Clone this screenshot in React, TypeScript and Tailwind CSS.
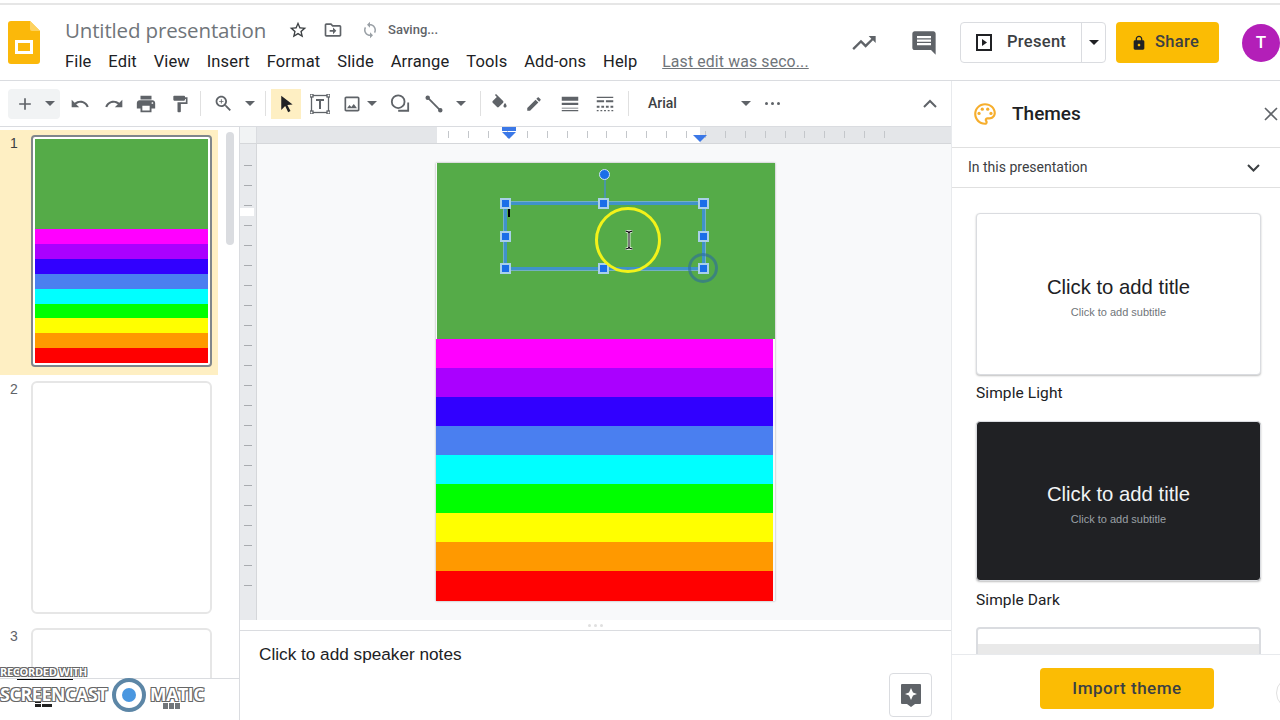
import React from 'react';

const I: React.FC<{ d: string; size?: number; className?: string; children?: React.ReactNode }> = ({ d, size = 24, className = '', children }) => (
  <svg width={size} height={size} viewBox="0 0 24 24" fill="currentColor" className={className}>
    <path d={d} />
    {children}
  </svg>
);

const P = {
  plus: 'M19 13h-6v6h-2v-6H5v-2h6V5h2v6h6v2z',
  undo: 'M12.5 8c-2.65 0-5.05.99-6.9 2.6L2 7v9h9l-3.62-3.62c1.39-1.16 3.16-1.88 5.12-1.88 3.54 0 6.55 2.31 7.6 5.5l2.37-.78C21.08 11.03 17.15 8 12.5 8z',
  redo: 'M18.4 10.6C16.55 8.99 14.15 8 11.5 8c-4.65 0-8.58 3.03-9.96 7.22L3.9 16c1.05-3.19 4.05-5.5 7.6-5.5 1.95 0 3.73.72 5.12 1.88L13 16h9V7l-3.6 3.6z',
  print: 'M19 8H5c-1.66 0-3 1.34-3 3v6h4v4h12v-4h4v-6c0-1.66-1.34-3-3-3zm-3 11H8v-5h8v5zm3-7c-.55 0-1-.45-1-1s.45-1 1-1 1 .45 1 1-.45 1-1 1zm-1-9H6v4h12V3z',
  paint: 'M18 4V3c0-.55-.45-1-1-1H5c-.55 0-1 .45-1 1v4c0 .55.45 1 1 1h12c.55 0 1-.45 1-1V6h1v4H9v11c0 .55.45 1 1 1h2c.55 0 1-.45 1-1v-9h8V4h-3z',
  zoom: 'M15.5 14h-.79l-.28-.27C15.41 12.59 16 11.11 16 9.5 16 5.91 13.09 3 9.5 3S3 5.91 3 9.5 5.91 16 9.5 16c1.61 0 3.09-.59 4.23-1.57l.27.28v.79l5 4.99L20.49 19l-4.99-5zm-6 0C7.01 14 5 11.99 5 9.5S7.01 5 9.5 5 14 7.01 14 9.5 11.99 14 9.5 14zm.5-7H9v2H7v1h2v2h1v-2h2V9h-2z',
  arrow: 'M6 3l13 10.2-6 .5 3.6 7-2.7 1.3-3.4-7.1L6 19.5z',
  image: 'M19 5v14H5V5h14m0-2H5c-1.1 0-2 .9-2 2v14c0 1.1.9 2 2 2h14c1.1 0 2-.9 2-2V5c0-1.1-.9-2-2-2zm-4.86 8.86l-3 3.87L9 13.14 6 17h12l-3.86-5.14z',
  fill: 'M16.56 8.94L7.62 0 6.21 1.41l2.38 2.38-5.15 5.15c-.59.59-.59 1.54 0 2.12l5.5 5.5c.29.29.68.44 1.06.44s.77-.15 1.06-.44l5.5-5.5c.59-.58.59-1.53 0-2.12zM19 11.5s-2 2.17-2 3.5c0 1.1.9 2 2 2s2-.9 2-2c0-1.33-2-3.5-2-3.5z',
  pencil: 'M3 17.25V21h3.75L17.81 9.94l-3.75-3.75L3 17.25zM20.71 7.04c.39-.39.39-1.02 0-1.41l-2.34-2.34c-.39-.39-1.02-.39-1.41 0l-1.83 1.83 3.75 3.75 1.83-1.83z',
  weight: 'M3 17h18v-1H3v1zm0 3h18v-1.5H3V20zM3 13h18v-2.5H3V13zM3 4v4.5h18V4H3z',
  dash: 'M3 16h3v-2H3v2zm5 0h3v-2H8v2zm5 0h3v-2h-3v2zm5 0h3v-2h-3v2zM3 20h2v-1.500H3V20zm4 0h2v-1.500H7V20zm4 0h2v-1.500h-2V20zm4 0h2v-1.500h-2V20zm4 0h2v-1.500h-2V20zM3 10h8V8H3v2zm10 0h8V8h-8v2zM3 5.500h18V4H3v1.500z',
  star: 'M22 9.24l-7.19-.62L12 2 9.19 8.63 2 9.24l5.46 4.73L5.82 21 12 17.27 18.18 21l-1.63-7.03L22 9.24zM12 15.4l-3.76 2.27 1-4.28-3.32-2.88 4.38-.38L12 6.1l1.71 4.04 4.38.38-3.32 2.88 1 4.28L12 15.4z',
  move: 'M20 6h-8l-2-2H4c-1.1 0-2 .9-2 2v12c0 1.1.9 2 2 2h16c1.1 0 2-.9 2-2V8c0-1.1-.9-2-2-2zm0 12H4V6h5.17l2 2H20v10zm-8-1v-3H8v-2h4V9l4 4-4 4z',
  sync: 'M12 4V1L8 5l4 4V6c3.31 0 6 2.69 6 6 0 1.01-.25 1.97-.7 2.8l1.46 1.46C19.54 15.03 20 13.57 20 12c0-4.42-3.58-8-8-8zm0 14c-3.31 0-6-2.69-6-6 0-1.010.25-1.970.7-2.800L5.240 7.740C4.460 8.970 4 10.430 4 12c0 4.420 3.580 8 8 8v3l4-4-4-4v3z',
  trend: 'M16 6l2.290 2.290-4.880 4.880-4-4L2 16.590 3.410 18l6-6 4 4 6.300-6.290L22 12V6z',
  comment: 'M21.990 4c0-1.100-.890-2-1.990-2H4c-1.100 0-2 .900-2 2v12c0 1.100.900 2 2 2h14l4 4-.010-18zM18 14H6v-2h12v2zm0-3H6V9h12v2zm0-3H6V6h12v2z',
  lock: 'M18 8h-1V6c0-2.760-2.240-5-5-5S7 3.240 7 6v2H6c-1.100 0-2 .900-2 2v10c0 1.100.900 2 2 2h12c1.100 0 2-.900 2-2V10c0-1.100-.900-2-2-2zm-6 9c-1.100 0-2-.900-2-2s.900-2 2-2 2 .900 2 2-.900 2-2 2zm3.100-9H8.900V6c0-1.710 1.390-3.100 3.100-3.100 1.710 0 3.100 1.390 3.100 3.100v2z',
  palette: 'M12 22C6.490 22 2 17.510 2 12S6.490 2 12 2s10 4.040 10 9c0 3.310-2.690 6-6 6h-1.770c-.280 0-.500.220-.500.500 0 .120.050.230.130.330.410.470.640 1.060.640 1.670 0 1.380-1.120 2.500-2.500 2.500zm0-18c-4.410 0-8 3.590-8 8s3.590 8 8 8c.280 0 .500-.220.500-.500 0-.160-.080-.280-.140-.350-.410-.460-.630-1.050-.630-1.650 0-1.380 1.120-2.500 2.500-2.500H16c2.210 0 4-1.790 4-4 0-3.860-3.590-7-8-7z',
};

const Caret: React.FC<{ className?: string }> = ({ className = 'text-[#5f6368]' }) => (
  <svg width="10" height="5" viewBox="0 0 10 5" fill="currentColor" className={className}>
    <path d="M0 0h10L5 5z" />
  </svg>
);

const Sep: React.FC<{ w: string }> = ({ w }) => (
  <div className={`${w} h-full flex items-center justify-center`}>
    <div className="w-px h-[25px] bg-[#e0e0e0]" />
  </div>
);

const MENU = ['File', 'Edit', 'View', 'Insert', 'Format', 'Slide', 'Arrange', 'Tools', 'Add-ons', 'Help'];

const STRIPES = ['bg-[#ff00ff]', 'bg-[#aa00ff]', 'bg-[#3100ff]', 'bg-[#4a7ff0]', 'bg-[#00ffff]', 'bg-[#00ff00]', 'bg-[#ffff00]', 'bg-[#ff9900]', 'bg-[#ff0000]'];

const Header = () => (
  <div className="h-[78px] shrink-0 mt-[3px] border-t-2 border-t-[#e6e6e6] border-b border-b-[#dadce0] flex items-start">
    <svg width="32" height="43" viewBox="0 0 32 43" className="ml-[8px] mt-[16px] shrink-0">
      <path d="M3 0h19l10 10v30a3 3 0 0 1-3 3H3a3 3 0 0 1-3-3V3a3 3 0 0 1 3-3z" fill="#fbb80a" />
      <path d="M22 0l10 10h-8a2 2 0 0 1-2-2z" fill="#fdd25f" />
      <rect x="7" y="19" width="18" height="14" fill="#fff" />
      <rect x="10" y="22" width="12" height="8" fill="#fbb80a" />
    </svg>
    <div className="ml-[25px] flex flex-col">
      <div className="flex items-center h-[30px] mt-[10px]">
        <span className="text-[20.500px] leading-none text-[#70757a] font-['Open_Sans',sans-serif] tracking-[-0.15px]">Untitled presentation</span>
        <I d={P.star} size={20} className="ml-[22px] text-[#3c4043]" />
        <I d={P.move} size={20} className="ml-[15px] text-[#5f6368]" />
        <I d={P.sync} size={18} className="ml-[18px] text-[#9aa0a6]" />
        <span className="ml-[9px] text-[13px] text-[#5f6368] font-['Roboto',sans-serif] font-medium">Saving...</span>
      </div>
      <div className="flex items-center h-[24px] mt-[5px] gap-[16.800px] text-[16.500px] text-[#202124] font-['Roboto',sans-serif] tracking-[0.15px]">
        {MENU.map((t) => (
          <span key={t}>{t}</span>
        ))}
        <span className="ml-[8px] text-[15.800px] text-[#70757a] underline whitespace-nowrap">Last edit was seco...</span>
      </div>
    </div>
    <div className="ml-auto flex items-center h-[41px] mt-[17px]">
      <I d={P.trend} size={28} className="text-[#5f6368] mr-[32px]" />
      <I d={P.comment} size={28} className="text-[#5f6368] mr-[22px]" />
      <div className="w-[146px] h-[41px] rounded border border-[#dadce0] flex items-center mr-[10px]">
        <svg width="18" height="18" viewBox="0 0 18 18" className="ml-[15px] text-[#202124]" fill="none" stroke="currentColor" strokeWidth="2">
          <rect x="1" y="1" width="14" height="15" />
          <path d="M6 5l5 3.500-5 3.500z" fill="currentColor" stroke="none" />
        </svg>
        <span className="ml-[13px] text-[16.500px] text-[#3c4043] font-['Roboto',sans-serif] font-medium tracking-[0.3px]">Present</span>
        <div className="ml-auto w-[24px] h-full border-l border-[#dadce0] flex items-center justify-center">
          <Caret className="text-[#202124]" />
        </div>
      </div>
      <div className="w-[103px] h-[41px] rounded bg-[#fbbc04] flex items-center mr-[23px]">
        <I d={P.lock} size={16} className="ml-[15px] text-[#202124]" />
        <span className="ml-[8px] text-[16.500px] text-[#3c4043] font-['Roboto',sans-serif] font-medium tracking-[0.3px]">Share</span>
      </div>
      <div className="w-[38px] h-[38px] rounded-full bg-[#b31fb8] text-white flex items-center justify-center text-[17px] font-['Roboto',sans-serif] font-medium">T</div>
    </div>
  </div>
);

const Toolbar = () => (
  <div className="h-[46px] shrink-0 border-b border-[#dadce0] flex items-center pl-[8px] text-[#5f6368]">
    <div className="w-[52px] h-[30px] rounded bg-[#f1f3f4] flex items-center">
      <I d={P.plus} size={20} className="ml-[7px]" />
      <Caret className="ml-[10px] text-[#5f6368]" />
    </div>
    <div className="w-[3px]" />
    <div className="w-[34px] flex justify-center"><I d={P.undo} size={20} /></div>
    <div className="w-[33px] flex justify-center"><I d={P.redo} size={20} /></div>
    <div className="w-[32px] flex justify-center"><I d={P.print} size={22} /></div>
    <div className="w-[35px] flex justify-center"><I d={P.paint} size={20} /></div>
    <Sep w="w-[7px]" />
    <div className="w-[34px] flex justify-end"><I d={P.zoom} size={21} className="mr-[4px]" /></div>
    <div className="w-[24px] flex justify-center"><Caret /></div>
    <Sep w="w-[6px]" />
    <div className="w-[3px]" />
    <div className="w-[30px] h-[30px] bg-[#feefc3] flex items-center justify-center text-[#202124]"><I d={P.arrow} size={21} /></div>
    <div className="w-[37px] flex justify-center">
      <svg width="20" height="20" viewBox="0 0 20 20" fill="none" stroke="currentColor" strokeWidth="1.300">
        <rect x="1.500" y="1.500" width="17" height="17" />
        <rect x="0" y="0" width="3" height="3" fill="#fff" />
        <rect x="17" y="0" width="3" height="3" fill="#fff" />
        <rect x="0" y="17" width="3" height="3" fill="#fff" />
        <rect x="17" y="17" width="3" height="3" fill="#fff" />
        <path d="M6 6h8M10 6v9" strokeWidth="2" />
      </svg>
    </div>
    <div className="w-[28px] flex justify-center"><I d={P.image} size={20} /></div>
    <div className="w-[11px] flex justify-center"><Caret /></div>
    <div className="w-[39px] flex justify-center pl-[7px]">
      <svg width="20" height="19" viewBox="0 0 22 20" fill="none" stroke="currentColor" strokeWidth="2">
        <circle cx="9" cy="8" r="7" />
        <path d="M9 18h11V9" />
      </svg>
    </div>
    <div className="w-[35px] flex justify-center">
      <svg width="18" height="18" viewBox="0 0 20 20" fill="none" stroke="currentColor" strokeWidth="2">
        <path d="M3 3l14 14" />
        <circle cx="3" cy="3" r="1.500" fill="currentColor" />
        <circle cx="17" cy="17" r="1.500" fill="currentColor" />
      </svg>
    </div>
    <div className="w-[19px] flex justify-center"><Caret /></div>
    <Sep w="w-[20px]" />
    <div className="w-[31px] -ml-[6px] flex justify-center"><I d={P.fill} size={19} /></div>
    <div className="w-[38px] flex justify-center"><I d={P.pencil} size={18} /></div>
    <div className="w-[33px] flex justify-center"><I d={P.weight} size={22} /></div>
    <div className="w-[37px] flex justify-center"><I d={P.dash} size={22} /></div>
    <Sep w="w-[10px]" />
    <span className="ml-[15px] w-[93px] text-[14px] text-[#3c4043] font-['Roboto',sans-serif] font-medium">Arial</span>
    <Caret />
    <div className="ml-[14px] flex gap-[3px]">
      <div className="w-[3px] h-[3px] rounded-full bg-[#5f6368]" />
      <div className="w-[3px] h-[3px] rounded-full bg-[#5f6368]" />
      <div className="w-[3px] h-[3px] rounded-full bg-[#5f6368]" />
    </div>
    <svg width="14" height="9" viewBox="0 0 14 9" fill="none" stroke="currentColor" strokeWidth="2" className="ml-auto mr-[14px]">
      <path d="M1 8l6-6 6 6" />
    </svg>
  </div>
);

const Filmstrip = () => (
  <div className="w-[240px] shrink-0 border-r border-[#dadce0] relative overflow-hidden">
    <div className="flex items-start mt-[3px] w-[218px] h-[245px] bg-[#feefc3] pt-[5px]">
      <span className="w-[31px] pl-[10px] text-[14px] leading-4 font-medium text-[#3c4043] font-['Liberation_Sans',sans-serif]">1</span>
      <div className="w-[181px] h-[232px] rounded border-2 border-[#80868b] bg-white p-[2px] flex flex-col">
        <div className="h-[91px] bg-[#55ab48]" />
        {STRIPES.map((c) => (
          <div key={c} className={`h-[15px] ${c}`} />
        ))}
      </div>
    </div>
    <div className="flex items-start mt-[6px]">
      <span className="w-[31px] pl-[10px] text-[14px] leading-4 text-[#5f6368] font-['Liberation_Sans',sans-serif]">2</span>
      <div className="w-[181px] h-[233px] rounded-md border-2 border-[#e6e6e6] bg-white" />
    </div>
    <div className="flex items-start mt-[14px]">
      <span className="w-[31px] pl-[10px] text-[14px] leading-4 text-[#5f6368] font-['Liberation_Sans',sans-serif]">3</span>
      <div className="w-[181px] h-[232px] rounded-md border-2 border-[#e6e6e6] bg-white" />
    </div>
    <div className="absolute top-[5px] left-[226px] w-[8px] h-[113px] rounded bg-[#dadce0]" />
    <div className="absolute left-0 right-0 bottom-0 h-[42px] bg-white border-t border-[#dadce0]">
      <div className="absolute left-[35px] top-[21px] flex flex-col gap-[1px]">
        <div className="w-[6px] h-[3px] bg-[#222]" />
        <div className="flex gap-[1px]"><div className="w-[6px] h-[3px] bg-[#222]" /><div className="w-[10px] h-[3px] bg-[#222]" /></div>
      </div>
      <div className="absolute left-[163px] top-[24px] flex gap-[1px]">
        <div className="w-[5px] h-[6px] bg-[#70757a]" />
        <div className="w-[5px] h-[6px] bg-[#70757a]" />
        <div className="w-[5px] h-[6px] bg-[#70757a]" />
      </div>
    </div>
  </div>
);

const Handle: React.FC<{ className: string }> = ({ className }) => (
  <div className={`absolute w-[11px] h-[11px] bg-[#1a6ee8] border-2 border-[#a9d0ea] ${className}`} />
);

const Selection = () => (
  <div className="absolute left-[69px] top-[40px] w-[201px] h-[68px] border-[3px] border-[#3f93c9] -m-px shadow-[0_0_0_1px_#74b0c4]">
    <div className="absolute left-1/2 -top-[28px] w-[2px] h-[28px] bg-[#4a97a4] -ml-[1px]" />
    <div className="absolute left-1/2 -top-[36px] w-[11px] h-[11px] rounded-full bg-[#1a6ee8] border border-[#cfe3f5] -ml-[5.500px]" />
    <Handle className="-left-[7px] -top-[7px]" />
    <Handle className="left-[91px] -top-[7px]" />
    <Handle className="-right-[7px] -top-[7px]" />
    <Handle className="-left-[7px] top-[26px]" />
    <Handle className="-right-[7px] top-[26px]" />
    <Handle className="-left-[7px] -bottom-[7px]" />
    <Handle className="left-[91px] -bottom-[7px]" />
    <Handle className="-right-[7px] -bottom-[7px]" />
    <div className="absolute left-[1px] top-[4px] w-[2px] h-[8px] bg-black" />
    <div className="absolute -right-[16px] -bottom-[16px] w-[30px] h-[30px] rounded-full border-[3px] border-[#2c6aa0]/60" />
    <div className="absolute left-[88px] top-[2px] w-[66px] h-[66px] rounded-full border-[3px] border-[#f2f21a]" />
    <svg width="10" height="20" viewBox="0 0 8 18" className="absolute left-[117px] top-[25px]" fill="none">
      <path d="M1 1c2 0 3 1 3 2v12c0 1 1 2 3 2M7 1C5 1 4 2 4 3M4 15c0 1-1 2-3 2" stroke="#fff" strokeWidth="2.500" />
      <path d="M1 1c2 0 3 1 3 2v12c0 1 1 2 3 2M7 1C5 1 4 2 4 3M4 15c0 1-1 2-3 2" stroke="#111" strokeWidth="1" />
    </svg>
  </div>
);

const Editor = () => (
  <div className="flex-1 flex flex-col min-w-0">
    <div className="h-[17px] shrink-0 flex bg-[#e4e6e9] border-b border-[#d5d7da] relative">
      <div className="w-[17px] h-full bg-[#f1f3f4] border-r border-[#dadce0]" />
      <div className="w-[180px]" />
      <div className="w-[263px] h-full bg-white" />
      <div className="absolute left-[208px] top-[4px] flex gap-[18.800px]">
        {Array.from({ length: 23 }, (_, i) => (
          <div key={i} className="w-px h-[7px] bg-[#c4c7cb]" />
        ))}
      </div>
      <div className="absolute left-[262px] top-0 w-[14px] h-[4px] bg-[#3b78e7]" />
      <svg width="14" height="7" viewBox="0 0 14 7" className="absolute left-[262px] top-[5px]"><path d="M0 0h14L7 7z" fill="#3b78e7" /></svg>
      <svg width="14" height="7" viewBox="0 0 14 7" className="absolute left-[453px] top-[8px]"><path d="M0 0h14L7 7z" fill="#3b78e7" /></svg>
    </div>
    <div className="flex-1 flex min-h-0">
      <div className="w-[17px] shrink-0 bg-[#e8eaed] border-r border-[#d5d7da] flex flex-col items-center pt-[21px] gap-[19px] overflow-hidden relative">
        {Array.from({ length: 22 }, (_, i) => (
          <div key={i} className="w-[8px] h-px shrink-0 bg-[#a9acb0]" />
        ))}
        <div className="absolute left-0 right-[2px] top-[64px] h-[8px] bg-white" />
      </div>
      <div className="flex-1 bg-[#f8f9fa] pl-[179px] pt-[19px]">
        <div className="w-[339px] h-[438px] relative flex flex-col shadow-[0_0_2px_rgba(0,0,0,0.35)]">
          <div className="h-[176px] bg-[#55ab48] ml-px" />
          {STRIPES.map((c, i) => (
            <div key={c} className={`${i === 8 ? 'h-[30px]' : 'h-[29px]'} w-[337px] ${c}`} />
          ))}
          <Selection />
        </div>
      </div>
    </div>
    <div className="h-[11px] shrink-0 bg-white border-b border-[#dadce0] flex items-center justify-center gap-[3px]">
      <div className="w-[3px] h-[3px] rounded-full bg-[#e0e0e0]" />
      <div className="w-[3px] h-[3px] rounded-full bg-[#e0e0e0]" />
      <div className="w-[3px] h-[3px] rounded-full bg-[#e0e0e0]" />
    </div>
    <div className="h-[89px] shrink-0 flex items-start pl-[19px] pt-[11px] relative">
      <span className="text-[17.200px] text-[#202124] font-['Liberation_Sans',sans-serif]">Click to add speaker notes</span>
      <div className="absolute left-[649px] top-[42px] w-[43px] h-[44px] rounded border border-[#dadce0] flex items-center justify-center">
        <svg width="22" height="24" viewBox="0 0 22 24">
          <path d="M2 1h18a1 1 0 0 1 1 1v18a1 1 0 0 1-1 1h-5l-4 3-4-3H2a1 1 0 0 1-1-1V2a1 1 0 0 1 1-1z" fill="#5f6368" />
          <path d="M11 5l2 4.500 4 1.500-4 1.500-2 4.500-2-4.500-4-1.500 4-1.500z" fill="#fff" />
        </svg>
      </div>
    </div>
  </div>
);

const ThemeCard: React.FC<{ dark?: boolean }> = ({ dark }) => (
  <div className={`rounded-sm border flex flex-col items-center justify-center pt-[8px] font-['Liberation_Sans',sans-serif] shadow-[0_1px_2px_rgba(0,0,0,0.25)] ${dark ? 'h-[160px] bg-[#202124] border-[#dadce0]' : 'h-[162px] bg-white border-[#dadce0]'}`}>
    <div className={`text-[20.300px] leading-6 ${dark ? 'text-[#f1f3f4]' : 'text-[#202124]'}`}>Click to add title</div>
    <div className={`text-[11px] leading-3 mt-[7px] mb-[3px] ${dark ? 'text-[#9aa0a6]' : 'text-[#70757a]'}`}>Click to add subtitle</div>
  </div>
);

const Themes = () => (
  <div className="w-[329px] shrink-0 border-l border-[#e8eaed] flex flex-col relative bg-white">
    <div className="h-[67px] shrink-0 border-b border-[#e0e0e0] flex items-center pl-[20px]">
      <I d={P.palette} size={26} className="text-[#f6ae2d]">
        <circle cx="6.500" cy="11.500" r="1.500" />
        <circle cx="9.500" cy="7.500" r="1.500" />
        <circle cx="14.500" cy="7.500" r="1.500" />
        <circle cx="17.500" cy="11.500" r="1.500" />
      </I>
      <span className="ml-[14px] text-[19px] font-medium text-[#202124] font-['Roboto',sans-serif]">Themes</span>
      <svg width="14" height="14" viewBox="0 0 14 14" className="ml-auto mr-[2px] text-[#5f6368]" fill="none" stroke="currentColor" strokeWidth="1.600"><path d="M1 1l12 12M13 1L1 13" /></svg>
    </div>
    <div className="h-[40px] shrink-0 border-b border-[#e0e0e0] flex items-center pl-[16px] pr-[20px]">
      <span className="text-[14px] text-[#3c4043] font-['Roboto',sans-serif]">In this presentation</span>
      <svg width="13" height="8" viewBox="0 0 13 8" className="ml-auto text-[#3c4043]" fill="none" stroke="currentColor" strokeWidth="2"><path d="M1 1l5.500 5.500L12 1" /></svg>
    </div>
    <div className="flex-1 min-h-0 overflow-hidden pl-[24px] pr-[19px] pt-[25px]">
      <ThemeCard />
      <div className="mt-[8px] h-[20px] text-[15.500px] leading-5 tracking-[0.1px] text-[#202124] font-['Roboto',sans-serif]">Simple Light</div>
      <div className="h-[18px]" />
      <ThemeCard dark />
      <div className="mt-[9px] h-[20px] text-[15.500px] leading-5 tracking-[0.1px] text-[#202124] font-['Roboto',sans-serif]">Simple Dark</div>
      <div className="mt-[17px] h-[40px] rounded-sm border-2 border-[#dadce0] bg-white pt-[15px]">
        <div className="h-full bg-[#e9e9e9]" />
      </div>
    </div>
    <div className="h-[66px] shrink-0 border-t border-[#e8eaed] bg-white flex items-start justify-center pt-[13px] pl-[22px] relative">
      <div className="w-[174px] h-[41px] rounded bg-[#fbbc04] flex items-center justify-center pt-px text-[17px] font-medium text-[#3c4043] font-['Roboto',sans-serif] tracking-[0.5px]">Import theme</div>
      <div className="absolute -right-[28px] top-[22px] w-[32px] h-[32px] rounded-full border border-[#e0e0e0] bg-white" />
    </div>
  </div>
);

const Watermark = () => (
  <div className="absolute left-0 bottom-0 h-[60px] w-[210px] font-['Open_Sans',sans-serif] font-bold text-white [text-shadow:-1px_-1px_0_#666,1px_-1px_0_#666,-1px_1px_0_#666,1px_1px_0_#666]">
    <div className="absolute left-0 top-[6px] text-[11px] leading-3 tracking-[-0.3px] whitespace-nowrap">RECORDED WITH</div>
    <div className="absolute left-[17px] top-[19px] w-[56px] h-px bg-black" />
    <div className="absolute left-0 top-[24px] text-[17.700px] leading-5 tracking-[-0.3px]">SCREENCAST</div>
    <div className="absolute left-[112px] top-[18px] w-[34px] h-[34px] rounded-full bg-white border-[4px] border-[#5c86a6] flex items-center justify-center">
      <div className="w-[14px] h-[14px] rounded-full bg-[#4a97e0]" />
    </div>
    <div className="absolute left-[150px] top-[24px] text-[17.500px] leading-5 tracking-[-0.3px]">MATIC</div>
  </div>
);

export default function App() {
  return (
    <div className="w-[1280px] h-[720px] bg-white overflow-hidden flex flex-col relative">
      <Header />
      <div className="flex-1 flex min-h-0">
        <div className="w-[951px] shrink-0 flex flex-col">
          <Toolbar />
          <div className="flex-1 flex min-h-0">
            <Filmstrip />
            <Editor />
          </div>
        </div>
        <Themes />
      </div>
      <Watermark />
    </div>
  );
}
